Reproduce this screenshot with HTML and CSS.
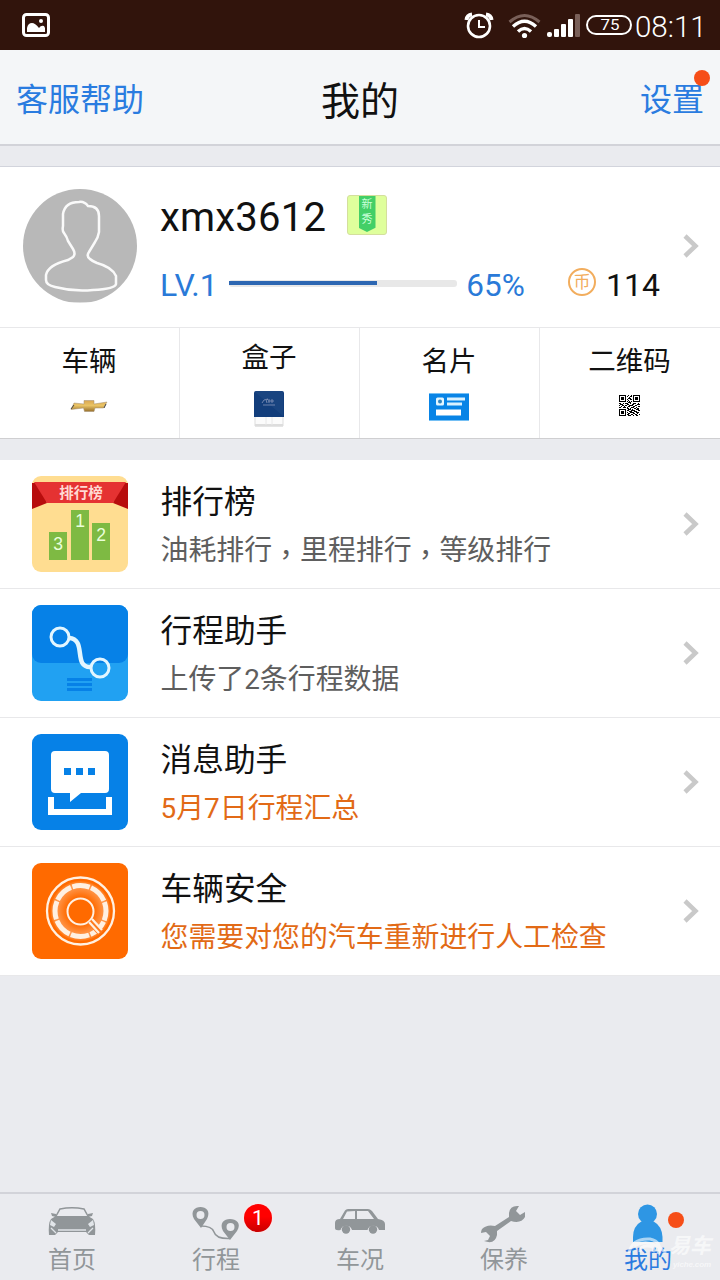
FILE: index.html
```
<!DOCTYPE html>
<html lang="zh-CN">
<head>
<meta charset="utf-8">
<title>我的</title>
<link rel="stylesheet" href="styles.css">
</head>
<body>
<div class="status">
  <svg class="status-picture" width="28" height="24" viewBox="0 0 28 24"><rect x="1.5" y="1.5" width="25" height="21" rx="3" fill="none" stroke="#fff" stroke-width="3"/><path d="M5 19V15Q6 10 10 10Q13 10 17 15Q19 12 22 13L23 15V19Z" fill="#fff"/><circle cx="19" cy="8" r="2" fill="#fff"/></svg>
  <svg class="status-system" width="170" height="28" viewBox="0 0 170 28">
    <g fill="none" stroke="#fff" stroke-width="2.6"><circle cx="15" cy="15" r="11"/><path d="M15 9V16H21" stroke-width="2"/><path d="M2.500 9Q3 4 8 3.500M22 3.500Q27 4 27.500 9" stroke-width="4"/></g>
    <g fill="none" stroke="#fff" stroke-width="3.4"><path d="M45.500 11Q60.500-2 75.500 11" stroke="#795f58" stroke-width="3"/><path d="M49 15.500Q60.500 5 72 15.500M54 20.500Q60.500 14.500 67 20.500"/></g><circle cx="60.500" cy="24.500" r="2.600" fill="#fff"/>
    <g fill="#fff"><rect x="83" y="21" width="5" height="5" rx="2"/><rect x="90" y="18" width="5" height="8" rx="1"/><rect x="97" y="13" width="5" height="13" rx="1"/><rect x="104" y="8" width="5" height="18" rx="1"/><rect x="111" y="3" width="5" height="23" rx="1" fill="#795f58"/></g>
    <rect x="123" y="5" width="44" height="18" rx="9" fill="none" stroke="#fff" stroke-width="2"/>
    <text class="battery" x="136.500" y="19" textLength="19" lengthAdjust="spacingAndGlyphs">75</text>
  </svg>
  <span class="clock">08:11</span>
</div>
<header class="header">
  <a class="help">客服帮助</a><h1>我的</h1><a class="settings">设置<i class="dot"></i></a>
</header>

<section class="profile">
  <svg width="116" height="116" viewBox="0 0 116 116"><clipPath id="face"><path d="M0 0H116V113.500H0Z"/></clipPath><circle cx="58" cy="57" r="57" fill="#b8b8b8" clip-path="url(#face)"/><path d="M51 68Q54 65 51 60L46 52Q45 48 42 44Q40 42 41 37V25Q43 13 57 13Q62 12 66 17Q77 17 77 27V43Q76 49 73 53L67 63Q64 67 68 70Q70 72 75 74Q90 78 94 87V95Q93 100 71 101Q52 103 33 98Q24 96 24 91V86Q26 76 46 71Z" fill="none" stroke="#fafafa" stroke-width="2.500"/></svg>
  <div class="profile-main">
    <div class="name-line"><span class="name">xmx3612</span>
      <span class="rank"><span>新<br>秀</span></span>
    </div>
    <div class="level-line"><span class="level">LV.1</span><div class="progress"><div class="progress-value"></div></div><span class="percent">65%</span><span class="coin">币</span><span class="coins">114</span></div>
  </div>
  <svg class="chevron" width="18" height="26" viewBox="0 0 18 26"><path d="M3 3L13.500 13L3 23" fill="none" stroke="#c9c9c9" stroke-width="4.500"/></svg>
</section>
<nav class="shortcuts">
  <a><span>车辆</span><svg width="40" height="40" viewBox="0 0 40 40"><defs><linearGradient id="gold" x2="0" y2="1"><stop stop-color="#d8a650"/><stop offset=".45" stop-color="#eac466"/><stop offset="1" stop-color="#98702c"/></linearGradient></defs><path d="M5 16L15 17V13.500H25V17L38 15L34.500 21H26L25 24.500H15.500L14.500 21L2 22.500Z" fill="url(#gold)" stroke="#a38f70" stroke-width=".5"/><path d="M2 22L5 18M35 21L37 17" stroke="#454545"/></svg></a>
  <a class="box"><span>盒子</span><svg width="40" height="40" viewBox="0 0 40 40"><path d="M6 27H34V37H6Z" fill="#fbfbfb" stroke="#ddd"/><path d="M6 35H34V37.500H6Z" fill="#ddd"/><path d="M17 28V36M23 28V36" stroke="#e8e8e8"/><path d="M5 4Q5 2 7 2H33Q35 2 35 4V28H5Z" fill="#123d7b"/><path d="M6 3L34 27V4L33 2H7Z" fill="#244d87" opacity=".45"/><path d="M13 14Q14 10 19 10Q16 11 18 14M19 12H25M20 10V14M23 10V14M14 16H26" fill="none" stroke="#8795ba" stroke-width=".8"/></svg></a>
  <a><span>名片</span><svg width="40" height="40" viewBox="0 0 40 40"><path d="M0 6H40V34H0Z" fill="#0884e6"/><path d="M0 6.500H40M0 33.500H40" stroke="#74bff4"/><rect x="7" y="10.500" width="8" height="8" rx="1.500" fill="#e3f6ff"/><circle cx="11" cy="14.500" r="2" fill="#3385bf"/><path d="M18 12H36M18 17H33" stroke="#d9f1ff" stroke-width="3"/><path d="M7 25.500H32" stroke="#fff" stroke-width="6"/></svg></a>
  <a><span>二维码</span><svg class="qr" width="21" height="21" viewBox="0 0 21 21" shape-rendering="crispEdges"><path fill="none" stroke="#000" d="M.5.500H6.500V6.500H.5ZM14.500.500H20.500V6.500H14.500ZM.5 14.500H6.500V20.500H.5Z"/><path d="M2 2H5V5H2ZM16 2H19V5H16ZM2 16H5V19H2Z"/><path stroke="#000" d="M9 .5H10M12 .5H13M8 1.500H9M11 1.500H13M10 2.500H11M9 3.500H12M8 4.500H9M11 4.500H13M9 5.500H10M8 6.500H9M10 6.500H11M12 6.500H13M9 7.500H12M0 8.500H2M4 8.500H5M6 8.500H9M11 8.500H12M14 8.500H17M19 8.500H20M1 9.500H4M8 9.500H10M13 9.500H15M18 9.500H21M0 10.500H1M3 10.500H5M6 10.500H8M10 10.500H14M16 10.500H18M2 11.500H3M5 11.500H6M9 11.500H11M14 11.500H16M19 11.500H21M0 12.500H2M4 12.500H7M8 12.500H9M12 12.500H15M17 12.500H18M8 13.500H10M11 13.500H12M15 13.500H17M18 13.500H20M9 14.500H12M13 14.500H14M17 14.500H20M8 15.500H10M12 15.500H16M19 15.500H21M10 16.500H13M15 16.500H18M8 17.500H9M11 17.500H15M17 17.500H20M9 18.500H11M14 18.500H16M18 18.500H19M8 19.500H10M12 19.500H14M16 19.500H18M20 19.500H21M9 20.500H12M14 20.500H15M17 20.500H19"/></svg></a>
</nav>

<main class="list">
  <a class="row"><svg width="96" height="96" viewBox="0 0 96 96"><rect width="96" height="96" rx="9" fill="#ffdd91"/><path d="M0 7H8L15 27L0 33ZM96 7H88L81 27L96 33Z" fill="#b70d0d"/><path d="M2 6H94L81 27H15Z" fill="#e53232"/><path d="M17 56H35V84H17ZM39 34H57V84H39ZM60 47H78V84H60Z" fill="#7eba43"/><g class="podium"><text class="ribbon" x="49" y="21.500">排行榜</text><text x="48" y="50.500">1</text><text x="69" y="64.500">2</text><text x="26" y="74">3</text></g></svg><div><h2>排行榜</h2><p>油耗排行<span class="comma" lang="zh-TW">，</span>里程排行<span class="comma" lang="zh-TW">，</span>等级排行</p></div><svg class="chevron" width="18" height="26" viewBox="0 0 18 26"><path d="M3 3L13.500 13L3 23" fill="none" stroke="#c9c9c9" stroke-width="4.500"/></svg></a>
  <a class="row"><svg width="96" height="96" viewBox="0 0 96 96"><rect width="96" height="96" rx="9" fill="#21a1f2"/><rect width="96" height="58" rx="9" fill="#0681e7"/><g fill="none" stroke="#e3f6ff" stroke-width="3"><path d="M37 33C55 34 41 62 58 62" stroke-width="4.500"/><circle cx="28" cy="32" r="9"/><circle cx="68" cy="63" r="9"/></g><path d="M35 74.500H60M35 79.500H60M35 84.500H60" stroke="#0681e7" stroke-width="3"/></svg><div><h2>行程助手</h2><p>上传了2条行程数据</p></div><svg class="chevron" width="18" height="26" viewBox="0 0 18 26"><path d="M3 3L13.500 13L3 23" fill="none" stroke="#c9c9c9" stroke-width="4.500"/></svg></a>
  <a class="row"><svg width="96" height="96" viewBox="0 0 96 96"><rect width="96" height="96" rx="9" fill="#0681e7"/><path d="M16 63H22V75H74V63H80V81H16Z" fill="#fff"/><path d="M23 17H73Q77 17 77 21V55Q77 59 73 59H49L38 68V59H23Q19 59 19 55V21Q19 17 23 17Z" fill="#fff"/><path d="M32 34H39V41H32ZM44 34H51V41H44ZM56 34H63V41H56Z" fill="#0681e7"/></svg><div><h2>消息助手</h2><p class="notice">5月7日行程汇总</p></div><svg class="chevron" width="18" height="26" viewBox="0 0 18 26"><path d="M3 3L13.500 13L3 23" fill="none" stroke="#c9c9c9" stroke-width="4.500"/></svg></a>
  <a class="row"><svg width="96" height="96" viewBox="0 0 96 96"><defs><radialGradient id="glow"><stop offset=".45" stop-color="#ff6a00"/><stop offset=".85" stop-color="#ff9e58"/><stop offset="1" stop-color="#ff7510"/></radialGradient></defs><rect width="96" height="96" rx="9" fill="#ff6a00"/><circle cx="48.500" cy="48" r="30" fill="url(#glow)"/><g fill="none" stroke="#fff0e2"><circle cx="48.500" cy="48" r="33.500" stroke-width="2.300"/><circle cx="48.500" cy="48" r="25.500" stroke-width="5" stroke-dasharray="18.500 1.530" stroke-dashoffset="9.250" transform="rotate(-90 48.500 48)"/><circle cx="48.500" cy="48.500" r="13" stroke-width="2"/><path d="M58 58L69 70" stroke="#ff7a1c" stroke-width="7"/><path d="M57 59L67 70M60 56L70 67" stroke-width="2.300"/></g></svg><div><h2>车辆安全</h2><p class="notice">您需要对您的汽车重新进行人工检查</p></div><svg class="chevron" width="18" height="26" viewBox="0 0 18 26"><path d="M3 3L13.500 13L3 23" fill="none" stroke="#c9c9c9" stroke-width="4.500"/></svg></a>
</main>

<nav class="tabs">
  <a><svg width="56" height="44" viewBox="0 0 56 44"><path d="M11 17L16 8Q28 5.500 40 8L45 17" fill="none" stroke="#919699" stroke-width="1.500"/><path d="M12 15H44L49 18Q52 22 51 34H45L42 31H14L11 34H5Q4 22 7 18Z" fill="#919699"/><path d="M7 12L12 13V16L8 15ZM49 12L44 13V16L48 15Z" fill="#919699"/><path d="M7 19L12 23L10 26L6 24ZM49 19L44 23L46 26L50 24Z" fill="#e1e5e9"/><path d="M14 29H42M7 27L12 32M49 27L44 32" stroke="#e1e5e9" stroke-width="1.300"/></svg><span>首页</span></a>
  <a><svg width="56" height="44" viewBox="0 0 56 44"><path fill="#919699" fill-rule="evenodd" d="M13 27L6 18C2 10 7 6 12.500 6S23 10 19 18ZM12.500 10A4 4 0 1 0 12.500 18A4 4 0 1 0 12.500 10ZM42 39L35 30C31 22 36 18 42 18S54 22 49 30ZM42.500 22A4 4 0 1 0 42.500 30A4 4 0 1 0 42.500 22Z"/><path d="M13 25Q24 25 26 31Q28 38 42 37.500" fill="none" stroke="#919699" stroke-width="1.500"/></svg><span>行程</span><b class="badge">1</b></a>
  <a><svg width="56" height="44" viewBox="0 0 56 44"><path d="M8 18L13 9.500Q14 8 16 8H36Q38 8 40 10L46 18Q53 19 53 23V29H47A6 6 0 0 0 35.500 29H20A6 6 0 0 0 8.500 29Q3 30 3 27V22Q3 18 8 18ZM15 10.500L11 18H23V10ZM25 10V18H42L36 10Z" fill="#919699" fill-rule="evenodd"/><circle cx="14" cy="28.500" r="4.200" fill="#919699"/><circle cx="41" cy="28.500" r="4.200" fill="#919699"/></svg><span>车况</span></a>
  <a><svg width="56" height="44" viewBox="0 0 56 44"><path d="M43 5Q34 4 33 12L33 16L19 25Q11 23 6 28Q5 30 5 32L10 31L14 35L12 39L8 40Q19 44 21 34L21 30L35 20Q45 23 49 16L49 11L44 14L40 10Z" fill="#919699"/></svg><span>保养</span></a>
  <a class="active"><svg width="56" height="44" viewBox="0 0 56 44"><circle cx="27.500" cy="13" r="9.500" fill="#2e96e4"/><path d="M13 41V36Q13 25 22 20H33Q42 25 42.500 36V41Z" fill="#2e96e4"/></svg><span>我的</span><i class="dot tab-dot"></i>
    <svg class="watermark" width="90" height="44" viewBox="0 0 90 44"><g fill="none" stroke="#fff" stroke-width="3"><path d="M3 24Q6 9 24 10Q37 13 32 25M14 23Q14 17 21 17Q30 17 27 23M8 17Q24 8 40 24"/></g><text x="43" y="24" font-size="21">易车</text><text class="watermark-url" x="47" y="38" textLength="38">yiche.com</text></svg></a>
</nav>
</body>
</html>
```

FILE: styles.css
```
* { box-sizing: border-box; }
body { margin: 0; width: 720px; height: 1280px; overflow: hidden; display: flex; flex-direction: column; background: #eaebef; color: #111; font-family: Roboto, "Noto Sans CJK SC", sans-serif; }
h1, h2, p { margin: 0; font-weight: 400; }
svg { display: block; flex: none; }
.status { height: 50px; flex: none; display: flex; align-items: center; padding: 0 12px 0 22px; background: #31140c; color: #fff; }
.status-system { margin-left: auto; }
.battery { font: 400 14px Roboto, sans-serif; fill: #fff; }
.clock { width: 74px; padding: 4px 0 0 1px; font-size: 29.500px; font-weight: 300; line-height: 40px; }
.header { height: 96px; flex: none; display: grid; grid-template-columns: 160px 1fr 160px; align-items: center; padding: 6px 16px 0; background: #f4f6f8; border-bottom: 2px solid #d2d3d9; }
.header a { color: #2a7ce0; font-size: 32px; line-height: 48px; }
.header h1 { padding-top: 3px; text-align: center; font-size: 39px; line-height: 56px; }
.settings { position: relative; text-align: right; }
.dot { position: absolute; width: 16px; height: 16px; border-radius: 50%; background: #f64e18; }
.settings .dot { top: -6px; right: -6px; }
.profile { height: 162px; flex: none; margin-top: 20px; padding: 22px 20px 0 22px; display: flex; background: #fff; border-top: 1px solid #d2d4dc; border-bottom: 1px solid #e8e8ea; }
.profile-main { width: 500px; margin-left: 22px; padding-top: 1px; }
.name-line { display: flex; align-items: center; height: 56px; }
.name { width: 166px; font-size: 40px; line-height: 56px; letter-spacing: .2px; }
.rank { width: 40px; height: 40px; margin: -6px 0 0 21px; display: flex; justify-content: center; border: 1px solid #d4df9d; border-radius: 3px; background: #dfff9c; }
.rank span { width: 17px; height: 36px; background: #43cf67; clip-path: polygon(0 0, 100% 0, 100% 88%, 50% 100%, 0 88%); color: #c9ffd8; text-align: center; font-size: 11px; line-height: 15px; padding-top: 1px; }
.level-line { height: 44px; margin-top: 17px; display: flex; align-items: center; font-size: 32px; }
.level, .percent { color: #2a7ad8; }
.level { width: 69px; font-size: 32px; }
.progress { width: 229px; height: 7px; margin-top: -4px; border-radius: 3px; background: #e8e8e8; display: flex; align-items: center; }
.progress-value { width: 65%; height: 4px; background: #2d67b2; }
.percent { width: 93px; padding-left: 9px; font-size: 31.500px; }
.coin { width: 28px; height: 28px; margin: -7px 0 0 18px; border: 2px solid #f2ad5d; border-radius: 50%; color: #f2ad5d; font-size: 17px; line-height: 24px; text-align: center; }
.coins { margin-left: 10px; }
.chevron { margin-left: auto; }
.profile .chevron { margin-top: 44px; }
.shortcuts { height: 111px; flex: none; display: grid; grid-template-columns: repeat(4, 1fr); background: #fff; border-bottom: 1px solid #cfcfd1; }
.shortcuts a { padding: 14px 1px 0 0; display: flex; flex-direction: column; align-items: center; border-right: 1px solid #e8e8ea; font-size: 27.5px; line-height: 40px; }
.shortcuts a:last-child { border: 0; padding-right: 1px; }
.shortcuts svg { margin-top: 5px; }
.shortcuts .box { padding-top: 10px; }
.shortcuts .box svg { margin-top: 11px; }
.shortcuts .qr { margin: 13px 1px 0 0; }
.list { flex: 1; margin-top: 21px; }
.row { height: 129px; display: flex; padding: 16px 20px 0 32px; background: #fff; border-bottom: 1px solid #e8e8ea; }
.row > div { margin-left: 32.500px; padding-top: 3px; }
.row h2 { font-size: 31.700px; line-height: 48px; }
.row p { color: #5e5e5e; font-size: 27.900px; line-height: 47px; white-space: nowrap; }
.row .notice { color: #e26a16; }
.comma { font-family: "Noto Sans CJK TC", sans-serif; line-height: 1; vertical-align: -5px; }
.row .chevron { margin-top: 35px; }
.podium { font: 17.500px "Liberation Sans", sans-serif; fill: #eaffdb; text-anchor: middle; }
.ribbon { font: 700 14.500px "Noto Sans CJK SC", sans-serif; fill: #ffd9d4; }
.tabs { height: 88px; flex: none; display: grid; grid-template-columns: repeat(5, 1fr); border-top: 2px solid #d2d3d9; }
.tabs a { position: relative; display: flex; flex-direction: column; align-items: center; padding-top: 7px; color: #919699; font-size: 24px; line-height: 30px; }
.tabs .active { color: #2a7ae0; }
.badge { position: absolute; left: 100px; top: 10px; width: 28px; height: 28px; border-radius: 50%; background: linear-gradient(#f00 45%, #c80000); box-shadow: 0 0 0 1.500px #f5e8eb; color: #fff; text-align: center; font-size: 21px; font-weight: 400; line-height: 28px; }
.tab-dot { left: 92px; top: 18px; }
.watermark { position: absolute; left: 50px; top: 35px; opacity: .6; fill: #fff; font-family: "Noto Sans CJK SC", sans-serif; font-style: italic; font-weight: 700; }
.watermark-url { font: italic 700 8px "Liberation Sans", sans-serif; }
```
